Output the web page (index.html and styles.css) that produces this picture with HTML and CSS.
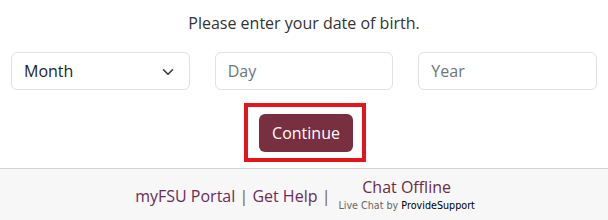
FILE: index.html
```html
<!DOCTYPE html>
<html lang="en">
<head>
<meta charset="utf-8">
<title>Date of birth</title>
<link rel="stylesheet" href="styles.css">
</head>
<body>
<main class="page">
  <p class="prompt">Please enter your date of birth.</p>
  <div class="fields">
    <div class="select">
      <span>Month</span>
      <svg class="chev" width="12" height="8" viewBox="0 0 12 8" aria-hidden="true"><path d="M1.5 1.8 6 6.2 10.5 1.8" fill="none" stroke="#343a40" stroke-width="1.6" stroke-linecap="round" stroke-linejoin="round"/></svg>
    </div>
    <input class="input" type="text" placeholder="Day">
    <input class="input" type="text" placeholder="Year">
  </div>
  <div class="actions">
    <div class="highlight">
      <button class="btn" type="button">Continue</button>
    </div>
  </div>
</main>
<footer class="footer">
  <div class="links">
    <a href="#" class="link">myFSU Portal</a><span class="sep"> | </span><a href="#" class="link">Get Help</a><span class="sep"> |</span>
  </div>
  <div class="chat">
    <a href="#" class="chat-status">Chat Offline</a>
    <div class="chat-by">Live Chat by <span class="ps">ProvideSupport</span></div>
  </div>
</footer>
</body>
</html>
```
FILE: styles.css
```css
* { box-sizing: border-box; }
html, body { margin: 0; padding: 0; }
body {
  font-family: "Open Sans", "Liberation Sans", sans-serif;
  font-size: 16px;
  color: #333333;
  background: #ffffff;
  width: 608px;
  height: 220px;
  overflow: hidden;
}
.page { padding: 11px 11px 0; }
.prompt {
  margin: 0;
  text-align: center;
  line-height: 24px;
}
.fields {
  margin-top: 17px;
  display: grid;
  grid-template-columns: 1fr 1fr 1fr;
  column-gap: 25px;
}
.select, .input {
  height: 38px;
  border: 1px solid #dee2e6;
  border-radius: 6px;
  font-family: inherit;
  font-size: 16px;
  padding: 0 12px;
  color: #212529;
  background: #fff;
  width: 100%;
}
.select {
  display: flex;
  align-items: center;
  justify-content: space-between;
  padding-right: 15px;
}
.input::placeholder { color: #6c757d; opacity: 1; }
.chev { display: block; margin-top: 1px; }
.actions {
  margin-top: 13px;
  display: flex;
  justify-content: center;
}
.highlight {
  border: 4px solid #e3161d;
  padding: 7px 9px 6px 11px;
  margin-left: 2px;
}
.btn {
  display: block;
  height: 38px;
  width: 94px;
  padding: 0;
  border: none;
  border-radius: 6px;
  background: #782f40;
  color: #ffffff;
  font-family: inherit;
  font-size: 16px;
}
.footer {
  margin-top: 6px;
  border-top: 1px solid #d3d3d3;
  background: #f7f7f7;
  height: 52px;
  display: flex;
  justify-content: center;
  align-items: center;
  gap: 8px;
  padding-left: 2px;
}
.links { padding-top: 3px; }
.link { color: #6b2c55; text-decoration: none; }
.sep { color: #7a5a3a; }
.chat {
  display: flex;
  flex-direction: column;
  align-items: center;
}
.chat-status {
  color: #6b2d3f;
  text-decoration: none;
  line-height: 20px;
}
.chat-by {
  font-family: "DejaVu Sans", sans-serif;
  font-size: 9.6px;
  color: #666666;
  line-height: 14px;
  margin-top: 2px;
}
.ps { color: #000000; }
```
